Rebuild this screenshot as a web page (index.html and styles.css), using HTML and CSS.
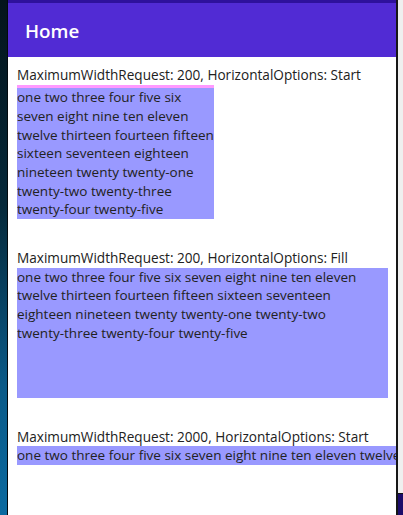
FILE: index.html
```html
<!DOCTYPE html>
<html>
<head>
<meta charset="utf-8">
<link rel="stylesheet" href="styles.css">
</head>
<body>
<div class="desktop">
  <div class="left-strip"></div>
  <div class="app">
    <div class="status-bar"></div>
    <div class="app-bar"><span class="title">Home</span></div>
    <div class="content">
      <div class="label first">MaximumWidthRequest: 200, HorizontalOptions: Start</div>
      <div class="pink-bar"></div>
      <div class="box narrow">one two three four five six seven eight nine ten eleven twelve thirteen fourteen fifteen sixteen seventeen eighteen nineteen twenty <span class="nb">twenty-one</span> <span class="nb">twenty-two</span> <span class="nb">twenty-three</span> <span class="nb">twenty-four</span> <span class="nb">twenty-five</span></div>
      <div class="label">MaximumWidthRequest: 200, HorizontalOptions: Fill</div>
      <div class="box fill">one two three four five six seven eight nine ten eleven twelve thirteen fourteen fifteen sixteen seventeen eighteen nineteen twenty <span class="nb">twenty-one</span> <span class="nb">twenty-two</span> <span class="nb">twenty-three</span> <span class="nb">twenty-four</span> <span class="nb">twenty-five</span></div>
      <div class="label">MaximumWidthRequest: 2000, HorizontalOptions: Start</div>
      <div class="box wide">one two three four five six seven eight nine ten eleven twelve thirteen fourteen fifteen sixteen seventeen eighteen nineteen twenty twenty-one twenty-two twenty-three twenty-four twenty-five</div>
    </div>
  </div>
  <div class="right-edge">
    <div class="right-gray"></div>
    <div class="right-navy"></div>
  </div>
</div>
</body>
</html>
```
FILE: styles.css
```css
html, body {
  margin: 0;
  padding: 0;
  width: 403px;
  height: 515px;
  overflow: hidden;
}

.desktop {
  display: flex;
  width: 403px;
  height: 515px;
}

.left-strip {
  width: 8px;
  flex: none;
  background: linear-gradient(to bottom, #04141b 0%, #05293a 40%, #0a5a88 75%, #0b6aa0 100%);
  box-shadow: inset -1px 0 0 #020a0e;
}

.app {
  width: 388px;
  flex: none;
  background: #ffffff;
  overflow: hidden;
  display: flex;
  flex-direction: column;
  font-family: "Open Sans", "Noto Sans", sans-serif;
}

.status-bar {
  height: 3px;
  background: #2e119c;
}

.app-bar {
  height: 54px;
  background: #512bd4;
  display: flex;
  align-items: center;
  padding-left: 17px;
  box-sizing: border-box;
}

.title {
  color: #ffffff;
  font-size: 18.8px;
  font-weight: 600;
  margin-top: 1px;
}

.content {
  padding-left: 9px;
  display: flex;
  flex-direction: column;
  align-items: flex-start;
}

.label {
  font-size: 13.6px;
  line-height: 18.67px;
  color: #212121;
  white-space: nowrap;
  margin-top: 30px;
}

.label.first {
  margin-top: 9px;
}

.pink-bar {
  width: 197px;
  height: 3.7px;
  background: #ff99ff;
}

.box {
  background: #9999ff;
  color: #222222;
  font-size: 13.5px;
  line-height: 18.67px;
}

.nb {
  white-space: nowrap;
}

.narrow {
  width: 197px;
}

.fill {
  width: 371px;
  height: 130px;
}

.wide {
  white-space: nowrap;
  width: 1000px;
  overflow: hidden;
}

.right-edge {
  flex: none;
  width: 7px;
  display: flex;
  flex-direction: column;
  border-left: 2px solid #161616;
  box-sizing: border-box;
}

.right-gray {
  height: 493px;
  background: #efefef;
  border-bottom: 1px solid #111111;
}

.right-navy {
  flex: 1;
  background: #1c0c6a;
}
```
